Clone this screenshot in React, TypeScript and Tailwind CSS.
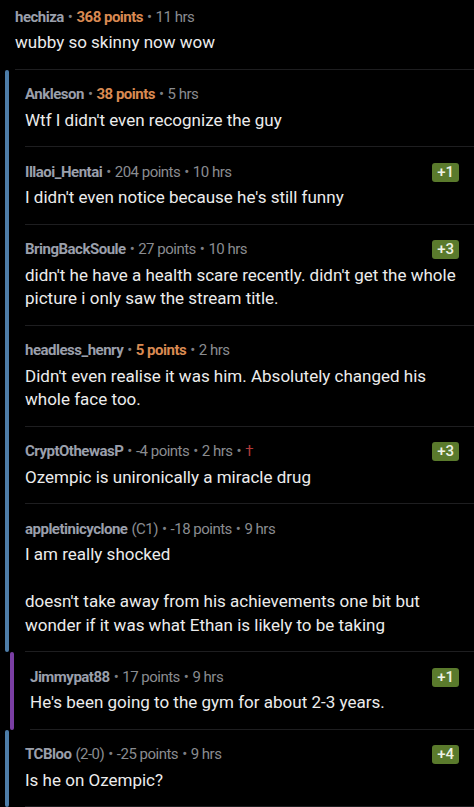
import React from 'react';

type C = {
  user: string;
  flair?: string;
  points: string;
  hot?: boolean;
  time: string;
  cross?: boolean;
  badge?: string;
  body: string[];
};

const top: C = { user: 'hechiza', points: '368 points', hot: true, time: '11 hrs', body: ['wubby so skinny now wow'] };

const thread: C[] = [
  { user: 'Ankleson', points: '38 points', hot: true, time: '5 hrs', body: ["Wtf I didn't even recognize the guy"] },
  { user: 'Illaoi_Hentai', points: '204 points', time: '10 hrs', badge: '+1', body: ["I didn't even notice because he's still funny"] },
  {
    user: 'BringBackSoule',
    points: '27 points',
    time: '10 hrs',
    badge: '+3',
    body: ["didn't he have a health scare recently. didn't get the whole", 'picture i only saw the stream title.'],
  },
  {
    user: 'headless_henry',
    points: '5 points',
    hot: true,
    time: '2 hrs',
    body: ["Didn't even realise it was him. Absolutely changed his", 'whole face too.'],
  },
  { user: 'CryptOthewasP', points: '-4 points', time: '2 hrs', cross: true, badge: '+3', body: ['Ozempic is unironically a miracle drug'] },
  {
    user: 'appletinicyclone',
    flair: '(C1)',
    points: '-18 points',
    time: '9 hrs',
    body: ['I am really shocked', '', "doesn't take away from his achievements one bit but", 'wonder if it was what Ethan is likely to be taking'],
  },
];

const Dot = () => <span className="mx-[4px] text-[#7d7f84]">•</span>;

const Comment = ({ c, first }: { c: C; first?: boolean }) => (
  <div className={`${first ? 'pt-[7px]' : 'pt-[15px]'} pb-[14px] pr-[15px] border-b border-[#1e1e20]`}>
    <div className="flex items-center h-[20px]">
      <div className="flex-1 flex items-center text-[15px] tracking-[-0.5px] text-[#8a8c90] whitespace-nowrap">
        <span className="font-bold text-[#9a9fab]">{c.user}</span>
        {c.flair && <span className="ml-[4px]">{c.flair}</span>}
        <Dot />
        <span className={c.hot ? 'font-bold text-[#d98a52]' : ''}>{c.points}</span>
        <Dot />
        <span>{c.time}</span>
        {c.cross && (
          <>
            <Dot />
            <span className="text-[#b03a3a]">†</span>
          </>
        )}
      </div>
      {c.badge && (
        <span className="bg-[#5a7a2c] text-[#eef2e6] text-[15px] font-medium leading-[19px] px-[5px] rounded-[3px]">
          {c.badge}
        </span>
      )}
    </div>
    <div className="mt-[4px] text-[17px] leading-[23.5px] text-[#ececec]">
      {c.body.map((l, i) => (
        <div key={i} className="h-[23.5px] whitespace-nowrap">
          {l}
        </div>
      ))}
    </div>
  </div>
);

const Thread = ({ color, indent, items }: { color: string; indent: string; items: C[] }) => (
  <div className={`flex ${indent}`}>
    <div className={`w-[4px] shrink-0 rounded-full ${color}`} />
    <div className="flex-1 ml-[1px]">
      {items.map((c, i) => (
        <div key={i} className="pl-[15px]">
          <Comment c={c} />
        </div>
      ))}
    </div>
  </div>
);

export default function App() {
  return (
    <div className="min-h-screen bg-black overflow-hidden" style={{ fontFamily: 'Roboto, "Noto Sans", sans-serif' }}>
      <div className="pl-[15px]">
        <Comment c={top} first />
      </div>
      <Thread color="bg-[#4d7da8]" indent="pl-[5px]" items={thread} />
      <Thread
        color="bg-[#7a3ea3]"
        indent="pl-[10px]"
        items={[{ user: 'Jimmypat88', points: '17 points', time: '9 hrs', badge: '+1', body: ["He's been going to the gym for about 2-3 years."] }]}
      />
      <Thread
        color="bg-[#4d7da8]"
        indent="pl-[5px]"
        items={[{ user: 'TCBloo', flair: '(2-0)', points: '-25 points', time: '9 hrs', badge: '+4', body: ['Is he on Ozempic?'] }]}
      />
    </div>
  );
}
